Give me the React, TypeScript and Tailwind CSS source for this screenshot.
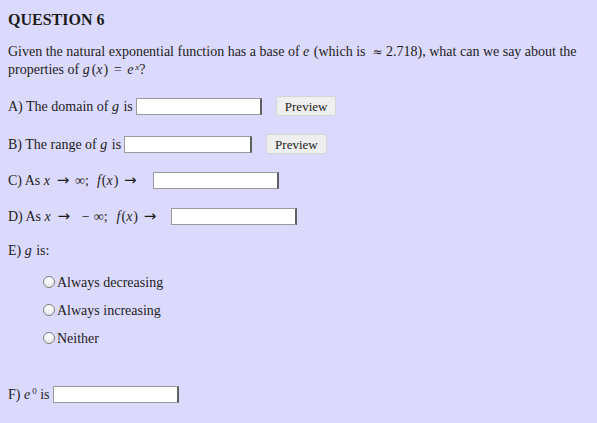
import type { ReactNode } from 'react'

function M({ children }: { children: ReactNode }) {
  // math variable, italic like MathJax
  return <span className="italic pr-[1px]">{children}</span>
}

function Arrow() {
  return (
    <span className="inline-block w-[14px] mx-[5px] text-center font-['DejaVu_Sans',sans-serif] text-[15px] leading-none">
      →
    </span>
  )
}

function Field({ w = 'w-[126px]' }: { w?: string }) {
  return (
    <span
      className={`inline-block ${w} h-[17px] bg-white border border-[#9a9a9a] border-r-[#5f5f5f] border-r-2 shrink-0`}
    />
  )
}

function PreviewButton() {
  return (
    <button
      type="button"
      className="h-[20px] px-[8px] bg-[#efefef] border border-[#d6d6d6] rounded-[3px] text-[13px] leading-none text-[#222] font-['Liberation_Serif','Times_New_Roman',serif]"
    >
      Preview
    </button>
  )
}

function Radio({ label }: { label: string }) {
  return (
    <div className="flex items-center h-[20px] pl-[35px]">
      <span className="w-[12px] h-[12px] rounded-full border border-[#7d7d7d] bg-gradient-to-b from-white to-[#e8e8e8] shrink-0" />
      <span className="ml-[2px]">{label}</span>
    </div>
  )
}

export default function App() {
  return (
    <div className="w-[597px] h-[423px] overflow-hidden bg-[#dcdafc] text-[#1c1c1c] text-[14px] px-[8px] font-['Liberation_Serif','Times_New_Roman',serif]">
      <h2 className="mt-[10px] text-[16px] leading-[20px] font-bold">QUESTION 6</h2>

      <p className="mt-[13px] leading-[18px]">
        Given the natural exponential function has a base of <M>e</M> (which is&nbsp;{' '}
        <span className="font-['DejaVu_Sans',sans-serif] text-[12px]">≈</span> 2.718), what can we say about the
        properties of <M>g</M>
        <span className="ml-[1px]">(</span>
        <M>x</M>) <span className="mx-[2px]">=</span> <M>e</M>
        <sup className="italic text-[9px] ml-[1px]">x</sup>?
      </p>

      <div className="mt-[17px] flex items-center h-[20px]">
        <span>
          A) The domain of <M>g</M> is
        </span>
        <span className="ml-[3px] flex">
          <Field />
        </span>
        <span className="ml-[14px]">
          <PreviewButton />
        </span>
      </div>

      <div className="mt-[18px] flex items-center h-[20px]">
        <span>
          B) The range of <M>g</M> is
        </span>
        <span className="ml-[3px] flex">
          <Field w="w-[128px]" />
        </span>
        <span className="ml-[14px]">
          <PreviewButton />
        </span>
      </div>

      <div className="mt-[16px] flex items-center h-[20px]">
        <span className="whitespace-nowrap flex items-center">
          C) As&nbsp;<M>x</M>
          <Arrow />∞;<span className="ml-[8px]"><M>f</M></span>(<M>x</M>)
          <Arrow />
        </span>
        <span className="ml-[11px] flex">
          <Field />
        </span>
      </div>

      <div className="mt-[16px] flex items-center h-[20px]">
        <span className="whitespace-nowrap flex items-center">
          D) As&nbsp;<M>x</M>
          <Arrow />
          <span className="ml-[6px]">−</span>
          <span className="ml-[4px]">∞;</span>
          <span className="ml-[9px]"><M>f</M></span>(<M>x</M>)
          <Arrow />
        </span>
        <span className="ml-[9px] flex">
          <Field />
        </span>
      </div>

      <div className="mt-[14px] flex items-center h-[20px]">
        <span>
          E) <M>g</M> is:
        </span>
      </div>

      <div className="mt-[12px] flex flex-col gap-[8px]">
        <Radio label="Always decreasing" />
        <Radio label="Always increasing" />
        <Radio label="Neither" />
      </div>

      <div className="mt-[36px] flex items-center h-[20px]">
        <span>
          F) <M>e</M>
          <sup className="text-[9px] ml-[1px]">0</sup>&nbsp;is
        </span>
        <span className="ml-[3px] flex">
          <Field />
        </span>
      </div>
    </div>
  )
}
